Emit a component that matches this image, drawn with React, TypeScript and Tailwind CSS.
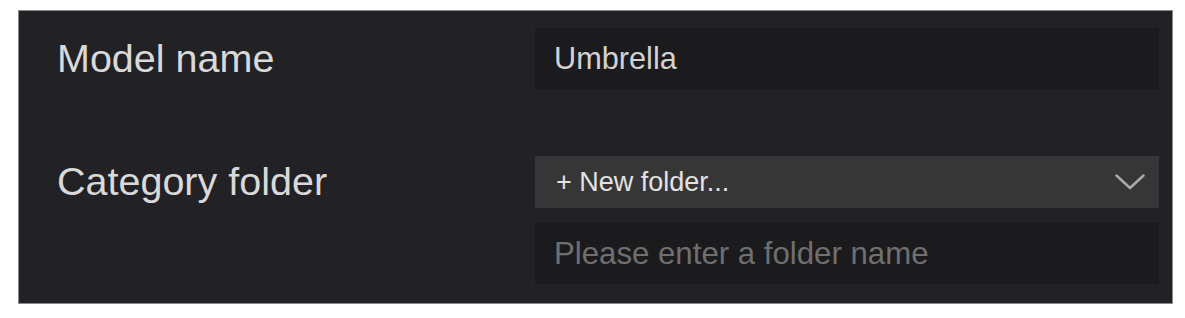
import { useState } from 'react';

const font = { fontFamily: '"Liberation Sans", Arial, sans-serif' };

function Chevron() {
  return (
    <svg width="30" height="16" viewBox="0 0 30 16" fill="none" className="shrink-0">
      <polyline points="1.5,1.5 15,14 28.5,1.5" stroke="#a9a9a9" strokeWidth="2.5" strokeLinecap="round" strokeLinejoin="round" />
    </svg>
  );
}

export default function App() {
  const [name, setName] = useState('Umbrella');
  const [folder, setFolder] = useState('');

  return (
    <div className="min-h-[318px] w-[1185px] bg-white pt-[10px] pl-[18px]" style={font}>
      <div className="w-[1155px] h-[294px] bg-[#222226] border border-[#8a8a8a] pt-[17px] pb-[19px] flex flex-col">
        {/* model name row */}
        <div className="flex items-center">
          <div className="w-[516px] pl-[38px] text-[39.5px] leading-none text-[#d9d9d9]">Model name</div>
          <input
            value={name}
            onChange={(e) => setName(e.target.value)}
            className="w-[624px] h-[61px] bg-[#1b1b1d] pl-[19px] text-[30.7px] text-[#d2d2d2] outline-none"
            style={font}
          />
        </div>

        {/* category folder row */}
        <div className="flex items-start mt-[67px]">
          <div className="w-[516px] h-[52px] pl-[38px] flex items-center text-[39.5px] leading-none text-[#d9d9d9]">
            Category folder
          </div>
          <div className="flex flex-col gap-[15px] w-[624px]">
            <div className="h-[52px] bg-[#363637] pl-[21px] pr-[14px] flex items-center justify-between">
              <span className="text-[27px] text-[#e2e2e2]">+ New folder...</span>
              <Chevron />
            </div>
            <input
              value={folder}
              onChange={(e) => setFolder(e.target.value)}
              placeholder="Please enter a folder name"
              className="h-[61px] bg-[#1b1b1d] pl-[19px] text-[31.2px] text-[#d2d2d2] placeholder:text-[#6f6f70] outline-none"
              style={font}
            />
          </div>
        </div>
      </div>
    </div>
  );
}
